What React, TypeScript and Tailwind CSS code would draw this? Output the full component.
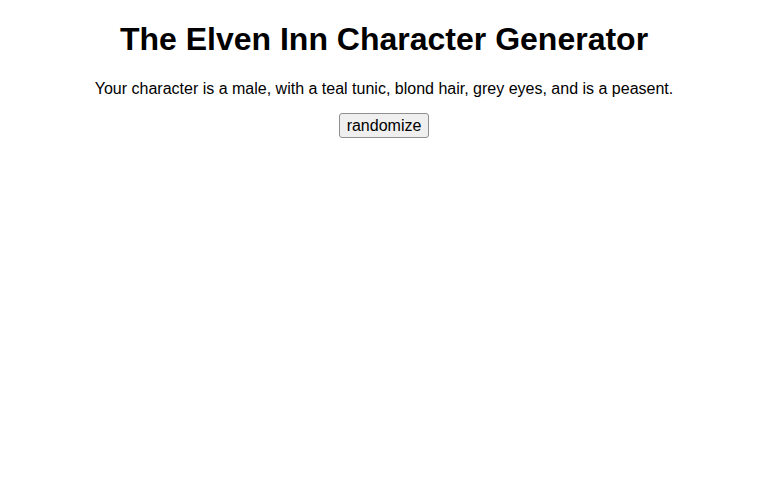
import { useState } from "react";

const traits = {
  gender: "male",
  tunic: "teal",
  hair: "blond",
  eyes: "grey",
  job: "peasent",
};

export default function App() {
  const [c] = useState(traits);

  return (
    <div className="min-h-[480px] bg-white text-center text-black font-['Liberation_Sans',Arial,sans-serif]">
      <h1 className="pt-[21px] text-[32px] font-bold leading-[37px]">
        The Elven Inn Character Generator
      </h1>
      <p className="mt-[22px] text-base leading-[18px]">
        Your character is a {c.gender}, with a {c.tunic} tunic, {c.hair} hair,{" "}
        {c.eyes} eyes, and is a {c.job}.
      </p>
      <button className="mt-[15px] rounded-[3px] border border-[#8f8f8f] bg-[#efefef] px-[7px] py-[2px] text-base leading-[19px] hover:bg-[#e5e5e5]">
        randomize
      </button>
    </div>
  );
}
